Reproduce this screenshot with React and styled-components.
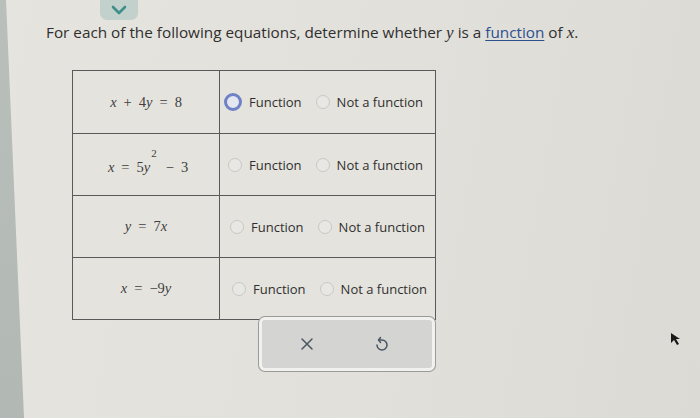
import React from "react";
import styled, { createGlobalStyle } from "styled-components";

const Global = createGlobalStyle`
  html, body { margin: 0; padding: 0; }
  body {
    width: 700px; height: 418px; overflow: hidden;
    background: #e3e1db;
    font-family: "Open Sans", "Liberation Sans", sans-serif;
  }
`;

const Page = styled.div`
  position: relative;
  display: flex;
  width: 700px;
  height: 418px;
  background: linear-gradient(100deg, #e6e4de 0%, #e2e0da 55%, #dcdad4 100%);
`;

const Bezel = styled.div`
  flex: 0 0 24px;
  background: linear-gradient(180deg, #b9bfbb, #b2b8b4);
  clip-path: polygon(0 0, 6px 0, 100% 100%, 0 100%);
`;

const Main = styled.div`
  flex: 1;
  display: flex;
  flex-direction: column;
`;

const Tab = styled.div`
  margin-left: 76px;
  width: 38px;
  height: 20px;
  background: #c3d1cc;
  border-radius: 0 0 7px 7px;
  display: flex;
  align-items: center;
  justify-content: center;
`;

const Prompt = styled.p`
  margin: 2px 0 0 22px;
  font-size: 15.3px;
  line-height: 20px;
  color: #2f2f2f;
`;

const Var = styled.span`
  font-family: "Liberation Serif", "DejaVu Serif", serif;
  font-style: italic;
  font-size: 17px;
`;

const Link = styled.span`
  color: #2e4f8f;
  text-decoration: underline;
  text-underline-offset: 2px;
`;

const Table = styled.div`
  margin: 27px 0 0 48px;
  width: 362px;
  border: 1px solid #595959;
  display: grid;
  grid-template-columns: 147px 1fr;
  background: #e5e3dd;
`;

const EqCell = styled.div`
  height: 62px;
  display: flex;
  align-items: center;
  justify-content: center;
  border-right: 1px solid #595959;
  border-top: ${p => (p.$first ? "none" : "1px solid #595959")};
  font-family: "Liberation Serif", "DejaVu Serif", serif;
  font-size: 14.5px;
  color: #3f3f3f;
  box-sizing: border-box;
`;

const Eq = styled.span`
  white-space: nowrap;
  margin-left: ${p => p.$ml || 0}px;
`;

const I = styled.i`
  font-style: italic;
`;

const Op = styled.span`
  margin: 0 7px;
`;

const Sup = styled.sup`
  font-size: 11px;
  vertical-align: 15px;
  line-height: 0;
  margin-left: 1px;
  margin-right: 2px;
`;

const ChoiceCell = styled.div`
  height: 62px;
  display: flex;
  align-items: center;
  padding-left: ${p => p.$pl}px;
  border-top: ${p => (p.$first ? "none" : "1px solid #595959")};
  box-sizing: border-box;
  font-size: 13px;
  color: #2f2f2f;
`;

const Option = styled.label`
  display: flex;
  align-items: center;
  gap: 7px;
  margin-right: ${p => p.$mr}px;
`;

const Radio = styled.span`
  box-sizing: border-box;
  display: inline-block;
  border-radius: 50%;
  width: ${p => (p.$on ? 18 : 14)}px;
  height: ${p => (p.$on ? 18 : 14)}px;
  margin-left: ${p => (p.$on ? -2 : 0)}px;
  border: ${p => (p.$on ? "3.5px solid #6f82c6" : "1px solid #c8c8c6")};
  background: ${p => (p.$on ? "#e4e6f0" : "#e8e7e3")};
`;

const Actions = styled.div`
  margin: -3px 0 0 235px;
  width: 176px;
  height: 54px;
  box-sizing: border-box;
  border: 3px solid #f1f1ef;
  border-radius: 6px;
  box-shadow: 0 0 0 1px #9a9a98;
  background: #d4d4d2;
  display: flex;
  align-items: center;
  justify-content: space-around;
  padding: 0 14px 0 8px;
`;

const IconBtn = styled.button`
  border: none;
  background: transparent;
  padding: 0;
  display: flex;
  width: 24px;
  height: 24px;
  align-items: center;
  justify-content: center;
`;

const Cursor = styled.svg`
  position: absolute;
  left: 670px;
  top: 332px;
`;

const rows = [
  { eq: (<><I>x</I><Op>+</Op>4<I>y</I><Op>=</Op>8</>), sel: true, pl: 6 },
  { eq: (<><I>x</I><Op>=</Op>5<I>y</I><Sup>2</Sup><Op>−</Op>3</>), pl: 8, ml: 4 },
  { eq: (<><I>y</I><Op>=</Op>7<I>x</I></>), pl: 10 },
  { eq: (<><I>x</I><Op>=</Op>−9<I>y</I></>), pl: 12 },
];

export default function App() {
  return (
    <Page>
      <Global />
      <Bezel />
      <Main>
        <Tab>
          <svg width="16" height="10" viewBox="0 0 16 10">
            <path d="M2 2 L8 8 L14 2" fill="none" stroke="#3e8f8a" strokeWidth="2.6" strokeLinecap="round" strokeLinejoin="round" />
          </svg>
        </Tab>
        <Prompt>
          For each of the following equations, determine whether <Var>y</Var> is a <Link>function</Link> of <Var>x</Var>.
        </Prompt>
        <Table>
          {rows.map((r, i) => (
            <React.Fragment key={i}>
              <EqCell $first={i === 0}><Eq $ml={r.ml}>{r.eq}</Eq></EqCell>
              <ChoiceCell $first={i === 0} $pl={r.pl}>
                <Option $mr={14}>
                  <Radio $on={r.sel} />
                  Function
                </Option>
                <Option $mr={0}>
                  <Radio />
                  Not a function
                </Option>
              </ChoiceCell>
            </React.Fragment>
          ))}
        </Table>
        <Actions>
          <IconBtn aria-label="clear">
            <svg width="14" height="14" viewBox="0 0 14 14">
              <path d="M2 2 L12 12 M12 2 L2 12" stroke="#4a5561" strokeWidth="1.5" strokeLinecap="round" />
            </svg>
          </IconBtn>
          <IconBtn aria-label="undo">
            <svg width="14" height="16" viewBox="0 0 14 16">
              <path d="M5 4 H8 A5 5 0 1 1 3 9" fill="none" stroke="#4a5561" strokeWidth="1.5" strokeLinecap="round" />
              <path d="M6.5 1.5 L4.5 4 L6.5 6.5" fill="none" stroke="#4a5561" strokeWidth="1.5" strokeLinecap="round" strokeLinejoin="round" />
            </svg>
          </IconBtn>
        </Actions>
      </Main>
      <Cursor width="12" height="14" viewBox="0 0 12 14">
        <path d="M1 1 L1 11 L4 8 L7 13 L9 12 L6 7 L10 7 Z" fill="#1a1a1a" />
      </Cursor>
    </Page>
  );
}
